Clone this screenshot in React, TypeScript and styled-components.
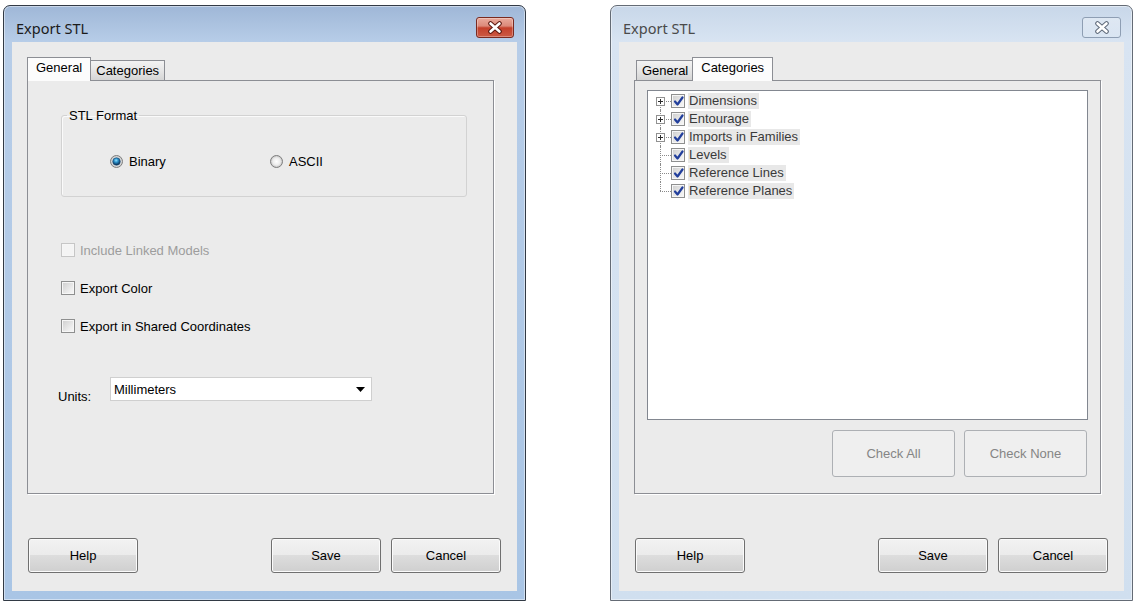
import { useState } from "react";
import styled, { createGlobalStyle, css } from "styled-components";

const GlobalStyle = createGlobalStyle`
  html, body {
    margin: 0;
    padding: 0;
    background: #ffffff;
  }
  body {
    font-family: "Liberation Sans", Arial, sans-serif;
    font-size: 13px;
    color: #000;
  }
  * {
    box-sizing: border-box;
  }
`;

const Page = styled.div`
  display: flex;
  gap: 84px;
  width: 1138px;
  height: 607px;
  padding: 5px 0 0 3px;
`;

const Frame = styled.div<{ $active: boolean }>`
  width: 523px;
  height: 596px;
  display: flex;
  flex-direction: column;
  border: 1px solid ${(p) => (p.$active ? "#323a45" : "#646b75")};
  border-radius: 7px 7px 0 0;
  background: ${(p) =>
    p.$active
      ? "linear-gradient(#9fb7d7, #b7cde8 36px, #a9c5e5)"
      : "linear-gradient(#c8d7e9, #d8e4f2 36px, #d0dfef)"};
  box-shadow: inset 0 0 0 1px rgba(255, 255, 255, 0.45);
`;

const TitleBar = styled.div`
  height: 36px;
  flex-shrink: 0;
  display: flex;
  align-items: center;
  padding: 8px 11px 0 12px;
`;

const Title = styled.span<{ $active: boolean }>`
  font-family: "Noto Sans", "Open Sans", sans-serif;
  font-size: 14.5px;
  color: ${(p) => (p.$active ? "#1b1b1b" : "#4a4a4a")};
`;

const CloseButton = styled.div<{ $active: boolean }>`
  align-self: flex-start;
  margin: 3px 0 0 auto;
  height: 21px;
  display: flex;
  align-items: center;
  justify-content: center;
  border-radius: 3px;
  ${(p) =>
    p.$active
      ? css`
          width: 38px;
          border: 1px solid #7a2a20;
          background: linear-gradient(#eaaa9c 0%, #dc8a7a 42%, #c4402b 52%, #cc5a44 100%);
          box-shadow: inset 0 0 0 1px rgba(255, 255, 255, 0.3);
        `
      : css`
          width: 39px;
          border: 1px solid #8e9eb3;
          background: linear-gradient(rgba(255, 255, 255, 0.35), rgba(255, 255, 255, 0.1));
        `}
`;

const Client = styled.div`
  flex: 1;
  margin: 0 8px 9px 8px;
  background: #ebebeb;
  display: flex;
  flex-direction: column;
  padding: 15px 16px 18px 15px;
`;

const TabStrip = styled.div`
  display: flex;
  align-items: flex-end;
  height: 23px;
  padding-left: 2px;
`;

const Tab = styled.div<{ $selected: boolean }>`
  position: relative;
  border: 1px solid #8c8e94;
  border-bottom: none;
  white-space: nowrap;
  cursor: default;
  ${(p) =>
    p.$selected
      ? css`
          z-index: 1;
          height: 24px;
          margin: 0 -1px -1px -2px;
          padding: 1px 8px 0;
          line-height: 18px;
          background: #fcfcfc;
        `
      : css`
          height: 20px;
          padding: 0 5px;
          line-height: 20px;
          background: linear-gradient(#f3f3f3, #e6e6e6 50%, #d5d5d5);
        `}
`;

const Panel = styled.div`
  width: 467px;
  height: 414px;
  border: 1px solid #8c8e94;
  background: #ebebeb;
  box-shadow: 1px 1px 0 #ffffff;
`;

const Footer = styled.div`
  margin-top: auto;
  display: flex;
  gap: 10px;
  padding-left: 1px;
`;

const PushButton = styled.button<{ $push?: boolean }>`
  width: 110px;
  height: 35px;
  padding: 0;
  ${(p) => p.$push && "margin-left: auto;"}
  border: 1px solid #707070;
  border-radius: 3px;
  background: linear-gradient(#f2f2f2, #ebebeb 48%, #dddddd 50%, #cfcfcf);
  box-shadow: inset 0 0 0 1px #fbfbfb;
  font: 13px "Liberation Sans", Arial, sans-serif;
  color: #000;
`;

/* General tab */

const GeneralPane = styled.div`
  display: flex;
  flex-direction: column;
  padding: 27px 0 0 30px;
`;

const GroupBox = styled.fieldset`
  margin: 0 0 0 3px;
  width: 406px;
  padding: 0;
  border: 1px solid #d2d2d2;
  border-radius: 3px;
  box-shadow: inset 1px 1px 0 #fafafa;
`;

const GroupLegend = styled.legend`
  margin-left: 5px;
  padding: 0 2px;
  line-height: 15px;
`;

const RadioRow = styled.div`
  display: flex;
  padding: 31px 0 27px 48px;
`;

const RadioOption = styled.label`
  display: flex;
  align-items: center;
  gap: 6px;
  width: 160px;
  height: 15px;
`;

const CheckList = styled.div`
  display: flex;
  flex-direction: column;
  gap: 22px;
  margin: 45px 0 0 3px;
`;

const CheckRow = styled.label<{ $disabled?: boolean }>`
  display: flex;
  align-items: center;
  gap: 5px;
  height: 16px;
  color: ${(p) => (p.$disabled ? "#9d9d9d" : "#000")};
`;

const CheckBox = styled.span<{ $disabled?: boolean; $size?: number }>`
  width: ${(p) => p.$size ?? 14}px;
  height: ${(p) => p.$size ?? 14}px;
  flex-shrink: 0;
  display: flex;
  align-items: center;
  justify-content: center;
  border: 1px solid ${(p) => (p.$disabled ? "#c6c6c6" : "#8e8f8f")};
  background: ${(p) =>
    p.$disabled
      ? "#f4f4f4"
      : "linear-gradient(135deg, #cdcdcd, #eeeeee 70%, #f8f8f8)"};
  box-shadow: inset 0 0 0 1px #f6f6f6;
`;

const UnitsRow = styled.div`
  display: flex;
  align-items: flex-end;
  margin-top: 43px;
`;

const UnitsLabel = styled.span`
  width: 52px;
  line-height: 15px;
  margin-bottom: -3px;
`;

const Dropdown = styled.div`
  width: 262px;
  height: 24px;
  display: flex;
  align-items: center;
  justify-content: space-between;
  padding: 0 6px 0 3px;
  background: #ffffff;
  border: 1px solid #cfcfcf;
`;

/* Categories tab */

const CategoriesPane = styled.div`
  display: flex;
  flex-direction: column;
  padding: 9px 12px 0 12px;
`;

const TreeBox = styled.div`
  height: 330px;
  border: 1px solid #828790;
  background: #ffffff;
  padding: 1px 0 0 3px;
`;

const TreeRow = styled.div`
  display: flex;
  align-items: center;
  height: 18px;
`;

const Expander = styled.span<{ $first: boolean; $last: boolean }>`
  position: relative;
  width: 18px;
  height: 18px;
  display: flex;
  align-items: center;
  justify-content: center;
  margin-right: 2px;
  &::before {
    content: "";
    position: absolute;
    left: 9px;
    top: ${(p) => (p.$first ? "9px" : "0")};
    bottom: ${(p) => (p.$last ? "9px" : "0")};
    border-left: 1px dotted #8a8a8a;
  }
  &::after {
    content: "";
    position: absolute;
    left: 9px;
    right: -2px;
    top: 9px;
    border-top: 1px dotted #8a8a8a;
  }
  svg {
    position: relative;
    z-index: 1;
  }
`;

const TreeLabel = styled.span`
  margin-left: 3px;
  padding: 0 2px 0 1px;
  line-height: 16px;
  background: #e8e8e8;
  color: #3a3a3a;
`;

const CheckButtons = styled.div`
  display: flex;
  justify-content: flex-end;
  gap: 9px;
  margin-top: 10px;
  padding-right: 1px;
`;

const FlatButton = styled.button`
  width: 123px;
  height: 47px;
  padding: 0;
  border: 1px solid #adb0b4;
  border-radius: 3px;
  background: #efefef;
  font: 13px "Liberation Sans", Arial, sans-serif;
  color: #858585;
`;

function CloseGlyph({ active }: { active: boolean }) {
  const d = "M3.5 2.5 L12.5 10.5 M12.5 2.5 L3.5 10.5";
  return (
    <svg width="16" height="13" viewBox="0 0 16 13">
      <path d={d} stroke={active ? "#5a1810" : "#5f6a7a"} strokeWidth="4.6" strokeLinecap="round" />
      <path d={d} stroke="#ffffff" strokeWidth="2.6" strokeLinecap="round" />
    </svg>
  );
}

function Radio({ checked }: { checked: boolean }) {
  const id = checked ? "rOn" : "rOff";
  return (
    <svg width="13" height="13" viewBox="0 0 13 13">
      <defs>
        <radialGradient id={`${id}Ring`} cx="0.5" cy="0.5" r="0.5">
          <stop offset="0" stopColor="#ffffff" />
          <stop offset="0.6" stopColor="#ececec" />
          <stop offset="1" stopColor="#c4c4c4" />
        </radialGradient>
        <radialGradient id={`${id}Dot`} cx="0.45" cy="0.35" r="0.6">
          <stop offset="0" stopColor="#8fe0ff" />
          <stop offset="0.45" stopColor="#2a8fc8" />
          <stop offset="1" stopColor="#0a2f55" />
        </radialGradient>
      </defs>
      <circle cx="6.5" cy="6.5" r="6" fill={`url(#${id}Ring)`} stroke="#7e7e7e" />
      {checked && <circle cx="6.5" cy="6.5" r="3.8" fill={`url(#${id}Dot)`} stroke="#1d4a72" strokeWidth="0.6" />}
    </svg>
  );
}

function CheckMark() {
  return (
    <svg width="11" height="11" viewBox="0 0 11 11">
      <path d="M2 5.5 L4.5 8.5 L9.5 1.5" fill="none" stroke="#223f9c" strokeWidth="2.2" strokeLinecap="round" strokeLinejoin="round" />
    </svg>
  );
}

function PlusBox() {
  return (
    <svg width="9" height="9" viewBox="0 0 9 9">
      <rect x="0.5" y="0.5" width="8" height="8" fill="#ffffff" stroke="#919191" />
      <path d="M2 4.5h5M4.5 2v5" stroke="#2b2b2b" />
    </svg>
  );
}

function DropArrow() {
  return (
    <svg width="9" height="5" viewBox="0 0 9 5">
      <path d="M0 0h9L4.5 5z" fill="#000" />
    </svg>
  );
}

function GeneralTab() {
  const [binary, setBinary] = useState(true);
  return (
    <GeneralPane>
      <GroupBox>
        <GroupLegend>STL Format</GroupLegend>
        <RadioRow>
          <RadioOption onClick={() => setBinary(true)}>
            <Radio checked={binary} />
            Binary
          </RadioOption>
          <RadioOption onClick={() => setBinary(false)}>
            <Radio checked={!binary} />
            ASCII
          </RadioOption>
        </RadioRow>
      </GroupBox>
      <CheckList>
        <CheckRow $disabled>
          <CheckBox $disabled />
          Include Linked Models
        </CheckRow>
        <CheckRow>
          <CheckBox />
          Export Color
        </CheckRow>
        <CheckRow>
          <CheckBox />
          Export in Shared Coordinates
        </CheckRow>
      </CheckList>
      <UnitsRow>
        <UnitsLabel>Units:</UnitsLabel>
        <Dropdown>
          <span>Millimeters</span>
          <DropArrow />
        </Dropdown>
      </UnitsRow>
    </GeneralPane>
  );
}

const categories = [
  { name: "Dimensions", children: true },
  { name: "Entourage", children: true },
  { name: "Imports in Families", children: true },
  { name: "Levels", children: false },
  { name: "Reference Lines", children: false },
  { name: "Reference Planes", children: false },
];

function CategoriesTab() {
  return (
    <CategoriesPane>
      <TreeBox>
        {categories.map((c, i) => (
          <TreeRow key={c.name}>
            <Expander $first={i === 0} $last={i === categories.length - 1}>
              {c.children && <PlusBox />}
            </Expander>
            <CheckBox $size={14}>
              <CheckMark />
            </CheckBox>
            <TreeLabel>{c.name}</TreeLabel>
          </TreeRow>
        ))}
      </TreeBox>
      <CheckButtons>
        <FlatButton disabled>Check All</FlatButton>
        <FlatButton disabled>Check None</FlatButton>
      </CheckButtons>
    </CategoriesPane>
  );
}

type TabKey = "general" | "categories";

function ExportDialog({ active, startTab }: { active: boolean; startTab: TabKey }) {
  const [tab, setTab] = useState<TabKey>(startTab);
  return (
    <Frame $active={active}>
      <TitleBar>
        <Title $active={active}>Export STL</Title>
        <CloseButton $active={active}>
          <CloseGlyph active={active} />
        </CloseButton>
      </TitleBar>
      <Client>
        <TabStrip>
          <Tab $selected={tab === "general"} onClick={() => setTab("general")}>
            General
          </Tab>
          <Tab $selected={tab === "categories"} onClick={() => setTab("categories")}>
            Categories
          </Tab>
        </TabStrip>
        <Panel>{tab === "general" ? <GeneralTab /> : <CategoriesTab />}</Panel>
        <Footer>
          <PushButton>Help</PushButton>
          <PushButton $push>Save</PushButton>
          <PushButton>Cancel</PushButton>
        </Footer>
      </Client>
    </Frame>
  );
}

export default function App() {
  return (
    <>
      <GlobalStyle />
      <Page>
        <ExportDialog active startTab="general" />
        <ExportDialog active={false} startTab="categories" />
      </Page>
    </>
  );
}
